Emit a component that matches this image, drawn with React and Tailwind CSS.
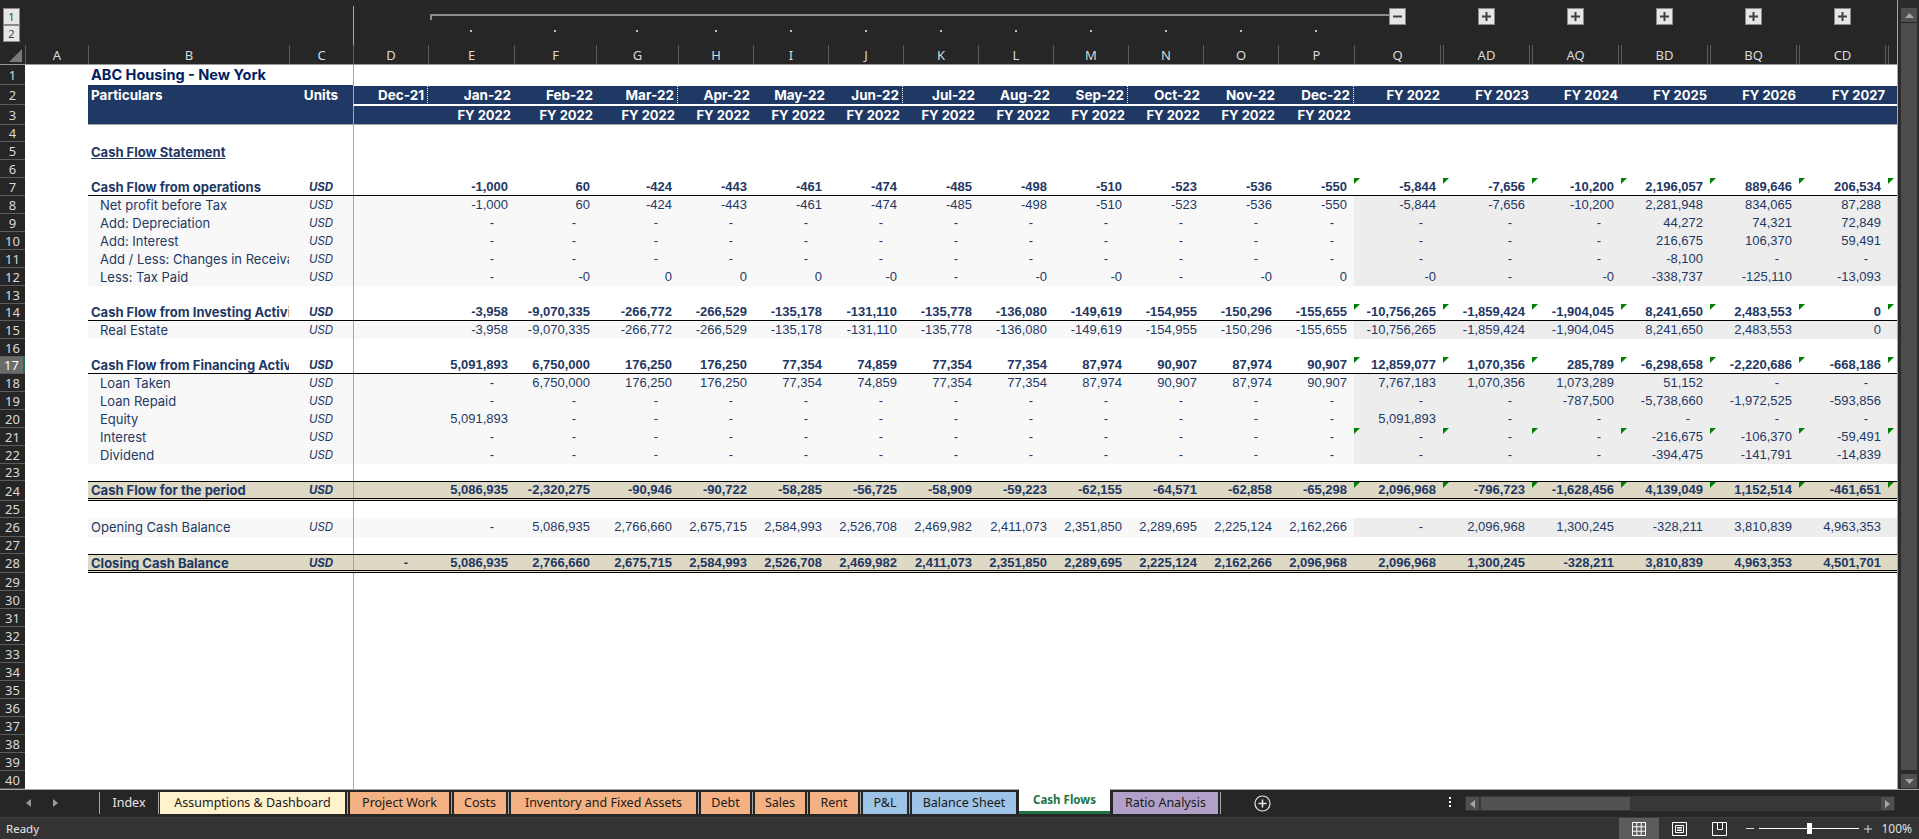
import React from "react";

const GRID = "grid grid-cols-[201px_64px_75px_86px_82px_82px_repeat(8,75px)_76px_repeat(6,89px)_9px] w-[1809px]";
const LABEL = "font-['Inter',sans-serif]";
const NUM = "font-['Liberation_Sans',sans-serif]";
const UI = "font-['Noto_Sans',sans-serif]";

const MONTHS = ["Dec-21","Jan-22","Feb-22","Mar-22","Apr-22","May-22","Jun-22","Jul-22","Aug-22","Sep-22","Oct-22","Nov-22","Dec-22","FY 2022","FY 2023","FY 2024","FY 2025","FY 2026","FY 2027"];
const LETTERS = ["B","C","D","E","F","G","H","I","J","K","L","M","N","O","P","Q","AD","AQ","BD","BQ","CD",""];
const DOTTED = new Set(["Dec-21","Mar-22","Jun-22","Sep-22","Dec-22"]);
const d = "-";

const rows = [
  { n: 4, h: "h-[17px]" },
  { n: 5, h: "h-[18px]", section: "Cash Flow Statement" },
  { n: 6, h: "h-[18px]" },
  { n: 7, h: "h-[18px]", kind: "head", tri: true, label: "Cash Flow from operations", v: ["","-1,000","60","-424","-443","-461","-474","-485","-498","-510","-523","-536","-550","-5,844","-7,656","-10,200","2,196,057","889,646","206,534"] },
  { n: 8, h: "h-[18px]", kind: "item", label: "Net profit before Tax", v: ["","-1,000","60","-424","-443","-461","-474","-485","-498","-510","-523","-536","-550","-5,844","-7,656","-10,200","2,281,948","834,065","87,288"] },
  { n: 9, h: "h-[18px]", kind: "item", label: "Add: Depreciation", v: ["",d,d,d,d,d,d,d,d,d,d,d,d,d,d,d,"44,272","74,321","72,849"] },
  { n: 10, h: "h-[18px]", kind: "item", label: "Add: Interest", v: ["",d,d,d,d,d,d,d,d,d,d,d,d,d,d,d,"216,675","106,370","59,491"] },
  { n: 11, h: "h-[18px]", kind: "item", label: "Add / Less: Changes in Receivables", v: ["",d,d,d,d,d,d,d,d,d,d,d,d,d,d,d,"-8,100",d,d] },
  { n: 12, h: "h-[18px]", kind: "item", label: "Less: Tax Paid", v: ["",d,"-0","0","0","0","-0",d,"-0","-0",d,"-0","0","-0",d,"-0","-338,737","-125,110","-13,093"] },
  { n: 13, h: "h-[18px]" },
  { n: 14, h: "h-[17px]", kind: "head", tri: true, label: "Cash Flow from Investing Activities", v: ["","-3,958","-9,070,335","-266,772","-266,529","-135,178","-131,110","-135,778","-136,080","-149,619","-154,955","-150,296","-155,655","-10,756,265","-1,859,424","-1,904,045","8,241,650","2,483,553","0"] },
  { n: 15, h: "h-[18px]", kind: "item", label: "Real Estate", v: ["","-3,958","-9,070,335","-266,772","-266,529","-135,178","-131,110","-135,778","-136,080","-149,619","-154,955","-150,296","-155,655","-10,756,265","-1,859,424","-1,904,045","8,241,650","2,483,553","0"] },
  { n: 16, h: "h-[18px]" },
  { n: 17, h: "h-[17px]", kind: "head", tri: true, sel: true, label: "Cash Flow from Financing Activities", v: ["","5,091,893","6,750,000","176,250","176,250","77,354","74,859","77,354","77,354","87,974","90,907","87,974","90,907","12,859,077","1,070,356","285,789","-6,298,658","-2,220,686","-668,186"] },
  { n: 18, h: "h-[18px]", kind: "item", label: "Loan Taken", v: ["",d,"6,750,000","176,250","176,250","77,354","74,859","77,354","77,354","87,974","90,907","87,974","90,907","7,767,183","1,070,356","1,073,289","51,152",d,d] },
  { n: 19, h: "h-[18px]", kind: "item", label: "Loan Repaid", v: ["",d,d,d,d,d,d,d,d,d,d,d,d,d,d,"-787,500","-5,738,660","-1,972,525","-593,856"] },
  { n: 20, h: "h-[18px]", kind: "item", label: "Equity", v: ["","5,091,893",d,d,d,d,d,d,d,d,d,d,d,"5,091,893",d,d,d,d,d] },
  { n: 21, h: "h-[18px]", kind: "item", tri: true, label: "Interest", v: ["",d,d,d,d,d,d,d,d,d,d,d,d,d,d,d,"-216,675","-106,370","-59,491"] },
  { n: 22, h: "h-[18px]", kind: "item", label: "Dividend", v: ["",d,d,d,d,d,d,d,d,d,d,d,d,d,d,d,"-394,475","-141,791","-14,839"] },
  { n: 23, h: "h-[17px]" },
  { n: 24, h: "h-[20px]", kind: "total", tri: true, label: "Cash Flow for the period", v: ["","5,086,935","-2,320,275","-90,946","-90,722","-58,285","-56,725","-58,909","-59,223","-62,155","-64,571","-62,858","-65,298","2,096,968","-796,723","-1,628,456","4,139,049","1,152,514","-461,651"] },
  { n: 25, h: "h-[17px]" },
  { n: 26, h: "h-[19px]", kind: "item", flat: true, label: "Opening Cash Balance", v: ["",d,"5,086,935","2,766,660","2,675,715","2,584,993","2,526,708","2,469,982","2,411,073","2,351,850","2,289,695","2,225,124","2,162,266",d,"2,096,968","1,300,245","-328,211","3,810,839","4,963,353"] },
  { n: 27, h: "h-[17px]" },
  { n: 28, h: "h-[19px]", kind: "total", label: "Closing Cash Balance", v: [d,"5,086,935","2,766,660","2,675,715","2,584,993","2,526,708","2,469,982","2,411,073","2,351,850","2,289,695","2,225,124","2,162,266","2,096,968","2,096,968","1,300,245","-328,211","3,810,839","4,963,353","4,501,701"] },
  ...[29,30,31,32,33,34,35,36,37,38,39,40].map((n) => ({ n, h: "h-[18px]" })),
];

function Tri() {
  return (
    <svg className="absolute top-0 left-0" width="6" height="6" viewBox="0 0 6 6">
      <polygon points="0,0 6,0 0,6" fill="#008000" />
    </svg>
  );
}

function RowNum({ n, sel }) {
  return (
    <div className={`w-[25px] shrink-0 h-full flex items-center justify-center border-b border-[#5c5c5c] text-[13px] leading-[14px] ${UI} ${sel ? "bg-[#6b6b6b] text-white border-r-2 border-r-[#217346]" : "bg-[#262626] text-[#d9d9d9]"}`}>
      {n}
    </div>
  );
}

function Row({ r }) {
  const k = r.kind;
  const wrap = k === "head" ? "border-b border-black" : k === "total" ? "bg-[#ddd9c4] border-t border-black border-b-[3px] border-double" : "";
  const weight = k === "item" ? "font-normal" : "font-bold";
  const leftBg = k === "item" ? "bg-[#f8f8f8]" : "";
  const rightBg = k === "item" ? "bg-[#ededed]" : "";
  const nudge = k === "item" ? "pb-[1px]" : "";
  return (
    <div className={`flex ${r.h}`}>
      <RowNum n={r.n} sel={r.sel} />
      <div className="w-[63px] shrink-0" />
      <div className={`${GRID} h-full ${wrap} ${k === "total" ? "border-b-black" : ""}`}>
        <div className={`${leftBg} ${k === "item" && !r.flat ? "pl-[12px]" : "pl-[3px]"} ${nudge} flex items-center overflow-hidden whitespace-nowrap leading-[14px] text-[#1f3864] ${LABEL} text-[13px] ${weight}`}>
          {r.section ? <span className="font-bold underline pt-[1px]">{r.section}</span> : r.label}
        </div>
        <div className={`${leftBg} ${nudge} flex items-center justify-center italic leading-[14px] text-[#1f3864] ${LABEL} text-[11.5px] ${weight}`}>
          {k ? "USD" : ""}
        </div>
        {MONTHS.map((m, i) => {
          const val = r.v ? r.v[i] : "";
          const bg = i >= 13 ? rightBg : leftBg;
          const pad = val === d ? "pr-[20px]" : i >= 12 ? "pr-[7px]" : "pr-[6px]";
          return (
            <div key={m} className={`relative ${bg} ${i === 0 ? "border-l border-[#a6a6a6]" : ""} ${pad} ${nudge} flex items-center justify-end whitespace-nowrap leading-[14px] text-[13px] text-[#1f3864] ${NUM} ${weight}`}>
              {r.tri && i >= 13 ? <Tri /> : null}
              {val}
            </div>
          );
        })}
        <div className={`relative ${rightBg}`}>{r.tri ? <Tri /> : null}</div>
      </div>
    </div>
  );
}

function OutlineBtn({ children }) {
  return (
    <div className={`w-[17px] h-[17px] flex items-center justify-center bg-[#e6e6e6] border border-[#8a8a8a] text-[11px] leading-none text-[#404040] ${UI}`}>
      {children}
    </div>
  );
}

function PlusMinus({ plus }) {
  return (
    <div className="w-[17px] h-[17px] flex items-center justify-center bg-[#e6e6e6] border border-[#8a8a8a] shrink-0">
      <svg width="9" height="9" viewBox="0 0 9 9">
        <rect x="0" y="3.5" width="9" height="2" fill="#404040" />
        {plus ? <rect x="3.5" y="0" width="2" height="9" fill="#404040" /> : null}
      </svg>
    </div>
  );
}

function Sep() {
  return <div className="w-[1px] h-[22px] mx-[2px] bg-[#a6a6a6] shrink-0" />;
}

function Tab({ w, bg, children }) {
  return (
    <div className={`${w} ${bg} h-[22px] shrink-0 flex items-center justify-center text-[12.5px] text-[#1a1a1a] whitespace-nowrap ${UI}`}>
      {children}
    </div>
  );
}

export default function App() {
  return (
    <div className={`w-[1919px] h-[839px] overflow-hidden flex flex-col bg-[#262626] ${UI}`}>
      <div className="flex h-[789px]">
        <div className="w-[1898px] shrink-0 flex flex-col border-r border-[#a6a6a6] bg-white">
          {/* outline bar */}
          <div className="flex h-[45px] bg-[#262626]">
            <div className="w-[25px] pt-[8px] pl-[3px] flex flex-col shrink-0">
              <OutlineBtn>1</OutlineBtn>
              <OutlineBtn>2</OutlineBtn>
            </div>
            <div className="w-[328px] shrink-0" />
            <div className="flex-1 mt-[6px] border-l border-[#a6a6a6] pt-[2px]">
              <div className="flex items-start h-[17px]">
                <div className="w-[76px] shrink-0" />
                <div className="w-[959px] shrink-0 h-[6px] mt-[6px] border-l-2 border-t-2 border-[#8c8c8c]" />
                <PlusMinus />
                {[0, 1, 2, 3, 4].map((i) => (
                  <div key={i} className="flex">
                    <div className="w-[72px]" />
                    <PlusMinus plus />
                  </div>
                ))}
              </div>
              <div className="grid grid-cols-[74px_86px_82px_82px_repeat(9,75px)] pt-[5px]">
                <div />
                {[0, 1, 2, 3, 4, 5, 6, 7, 8, 9, 10, 11].map((i) => (
                  <div key={i} className="flex justify-center">
                    <div className="w-[2px] h-[2px] bg-[#bfbfbf]" />
                  </div>
                ))}
              </div>
            </div>
          </div>
          {/* column letters */}
          <div className={`flex h-[20px] bg-[#262626] border-b border-[#9a9a9a] text-[13px] leading-[14px] text-[#d9d9d9] ${UI}`}>
            <div className="w-[25px] shrink-0 flex items-end justify-end pr-[3px] pb-[2px]">
              <svg width="13" height="13" viewBox="0 0 13 13"><polygon points="13,0 13,13 0,13" fill="#7a7a7a" /></svg>
            </div>
            <div className="w-[63px] shrink-0 flex items-center justify-center border-l border-[#5c5c5c]">A</div>
            <div className={GRID}>
              {LETTERS.map((l, i) => (
                <div key={i} className="flex items-center h-full border-l border-[#5c5c5c]">
                  <span className="flex-1 text-center">{l}</span>
                  {i >= 15 && i < 21 ? <span className="w-[3px] h-full border-l border-[#5c5c5c]" /> : null}
                </div>
              ))}
            </div>
          </div>
          {/* row 1 */}
          <div className="flex h-[20px]">
            <RowNum n={1} />
            <div className="w-[63px] shrink-0" />
            <div className={GRID}>
              <div className={`col-span-2 pl-[3px] pb-[1px] flex items-center whitespace-nowrap leading-[16px] text-[14.5px] font-bold text-[#002060] ${LABEL}`}>ABC Housing - New York</div>
              <div className="col-span-20 border-l border-[#a6a6a6]" />
            </div>
          </div>
          {/* row 2 */}
          <div className="flex h-[20px]">
            <RowNum n={2} />
            <div className="w-[63px] shrink-0" />
            <div className={GRID}>
              <div className={`bg-[#1f3864] pl-[3px] flex items-center text-white font-bold leading-[14px] text-[13.5px] ${LABEL}`}>Particulars</div>
              <div className={`bg-[#1f3864] flex items-center justify-center text-white font-bold leading-[14px] text-[13.5px] ${LABEL}`}>Units</div>
              {MONTHS.map((m, i) => (
                <div key={m} className={`bg-[#1f3864] border-t border-b border-t-white border-b-white pr-[3px] flex items-center justify-end text-white font-bold leading-[14px] ${i >= 13 ? "text-[13px]" : "text-[13.5px]"} whitespace-nowrap ${LABEL} ${i === 0 ? "border-l border-l-[#a6a6a6]" : ""} ${DOTTED.has(m) ? "border-r border-r-white [border-right-style:dotted]" : ""}`}>{m}</div>
              ))}
              <div className="bg-[#1f3864] border-t border-b border-white" />
            </div>
          </div>
          {/* row 3 */}
          <div className="flex h-[20px]">
            <RowNum n={3} />
            <div className="w-[63px] shrink-0" />
            <div className={`${GRID} border-b border-[#a6a6a6]`}>
              <div className="bg-[#1f3864]" />
              <div className="bg-[#1f3864]" />
              {MONTHS.map((m, i) => (
                <div key={m} className={`bg-[#1f3864] border-t border-white pr-[3px] flex items-center justify-end text-white font-bold leading-[14px] text-[13px] whitespace-nowrap ${LABEL} ${i === 0 ? "border-l border-l-[#a6a6a6]" : ""}`}>
                  {i >= 1 && i <= 12 ? "FY 2022" : ""}
                </div>
              ))}
              <div className="bg-[#1f3864] border-t border-white" />
            </div>
          </div>
          {rows.map((r) => (
            <Row key={r.n} r={r} />
          ))}
        </div>
        {/* vertical scrollbar */}
        <div className="flex-1 flex flex-col pl-[3px] pr-[2px] pt-[8px] pb-[1px] gap-[1px] bg-[#2b2b2b]">
          <div className="h-[14px] bg-[#4f4f4f] flex items-center justify-center shrink-0">
            <svg width="9" height="5" viewBox="0 0 9 5"><polygon points="4.5,0 9,5 0,5" fill="#a6a6a6" /></svg>
          </div>
          <div className="flex-1 bg-[#4c4c4c] mb-[3px]" />
          <div className="h-[14px] bg-[#4f4f4f] flex items-center justify-center shrink-0">
            <svg width="9" height="5" viewBox="0 0 9 5"><polygon points="0,0 9,0 4.5,5" fill="#a6a6a6" /></svg>
          </div>
        </div>
      </div>
      {/* tab bar */}
      <div className="h-[28px] border-t border-[#a6a6a6] bg-[#262626] flex items-start pt-[2px] shrink-0">
        <div className="w-[99px] h-[22px] shrink-0 flex items-center pl-[26px] gap-[22px]">
          <svg width="5" height="8" viewBox="0 0 5 8"><polygon points="5,0 5,8 0,4" fill="#9a9a9a" /></svg>
          <svg width="5" height="8" viewBox="0 0 5 8"><polygon points="0,0 0,8 5,4" fill="#9a9a9a" /></svg>
        </div>
        <div className="w-[1px] h-[22px] bg-[#a6a6a6] shrink-0" />
        <div className="w-[58px] h-[22px] shrink-0 flex items-center justify-center text-[12.5px] text-[#e6e6e6]">Index</div>
        <div className="w-[1px] h-[22px] bg-[#a6a6a6] shrink-0 mr-[1px]" />
        <Tab w="w-[185px]" bg="bg-[#fff2cc]">Assumptions &amp; Dashboard</Tab>
        <Sep />
        <Tab w="w-[99px]" bg="bg-[#f4b183]">Project Work</Tab>
        <Sep />
        <Tab w="w-[52px]" bg="bg-[#f4b183]">Costs</Tab>
        <Sep />
        <Tab w="w-[185px]" bg="bg-[#f4b183]">Inventory and Fixed Assets</Tab>
        <Sep />
        <Tab w="w-[49px]" bg="bg-[#f4b183]">Debt</Tab>
        <Sep />
        <Tab w="w-[50px]" bg="bg-[#f4b183]">Sales</Tab>
        <Sep />
        <Tab w="w-[48px]" bg="bg-[#f4b183]">Rent</Tab>
        <Sep />
        <Tab w="w-[44px]" bg="bg-[#9dc3e6]">P&amp;L</Tab>
        <Sep />
        <Tab w="w-[104px]" bg="bg-[#9dc3e6]">Balance Sheet</Tab>
        <div className="w-[3px] shrink-0" />
        <div className="w-[91px] h-[25px] -mt-[3px] shrink-0 bg-white border-b-[3px] border-[#217346] flex items-center justify-center text-[11.5px] font-bold text-[#217346]">Cash Flows</div>
        <div className="w-[3px] shrink-0" />
        <Tab w="w-[105px]" bg="bg-[#b1a0c7]">Ratio Analysis</Tab>
        <div className="w-[1px] h-[22px] ml-[2px] bg-[#a6a6a6] shrink-0" />
        <div className="w-[33px] shrink-0" />
        <svg width="17" height="17" viewBox="0 0 17 17" className="shrink-0 mt-[3px]">
          <circle cx="8.5" cy="8.5" r="7.5" fill="none" stroke="#e6e6e6" strokeWidth="1.2" />
          <path d="M8.5 4.5v8M4.5 8.5h8" stroke="#e6e6e6" strokeWidth="1.6" />
        </svg>
        <div className="w-[178px] shrink-0" />
        <div className="flex flex-col gap-[2px] mt-[5px] shrink-0">
          <div className="w-[2px] h-[2px] bg-white" />
          <div className="w-[2px] h-[2px] bg-white" />
          <div className="w-[2px] h-[2px] bg-white" />
        </div>
        <div className="w-[14px] shrink-0" />
        <div className="w-[430px] h-[15px] mt-[4px] shrink-0 bg-[#373737] flex items-center gap-[2px] px-[1px]">
          <div className="w-[13px] h-[13px] bg-[#4f4f4f] flex items-center justify-center shrink-0">
            <svg width="5" height="8" viewBox="0 0 5 8"><polygon points="5,0 5,8 0,4" fill="#a6a6a6" /></svg>
          </div>
          <div className="w-[149px] h-[13px] bg-[#525252] shrink-0" />
          <div className="flex-1" />
          <div className="w-[13px] h-[13px] bg-[#4f4f4f] flex items-center justify-center shrink-0">
            <svg width="5" height="8" viewBox="0 0 5 8"><polygon points="0,0 0,8 5,4" fill="#a6a6a6" /></svg>
          </div>
        </div>
      </div>
      {/* status bar */}
      <div className="h-[22px] bg-[#333333] border-t border-[#3f3f3f] flex items-center shrink-0">
        <div className="w-[1619px] pl-[6px] text-[11.5px] text-[#e6e6e6] shrink-0">Ready</div>
        <div className="w-[40px] h-full bg-[#5c5c5c] flex items-center justify-center shrink-0">
          <svg width="14" height="14" viewBox="0 0 14 14" fill="none" stroke="#fff"><path d="M.5.5h13v13H.5zM.5 4.8h13M.5 9.2h13M4.8.5v13M9.2.5v13" /></svg>
        </div>
        <div className="w-[40px] flex justify-center shrink-0">
          <svg width="15" height="14" viewBox="0 0 15 14" fill="none" stroke="#fff"><path d="M.5.5h14v13H.5zM3.5 3.5h8v7h-8zM5 5.5h5M5 7h5M5 8.5h5" /></svg>
        </div>
        <div className="w-[40px] flex justify-center shrink-0">
          <svg width="15" height="14" viewBox="0 0 15 14" fill="none" stroke="#fff"><path d="M.5.5h14v13H.5zM5.5.5v7h5v-7" /></svg>
        </div>
        <div className="w-[7px] shrink-0" />
        <div className="w-[8px] h-[1px] bg-[#d9d9d9] shrink-0" />
        <div className="w-[5px] shrink-0" />
        <div className="w-[100px] h-[1px] bg-white shrink-0 flex items-center pl-[48px]">
          <div className="w-[5px] h-[11px] bg-white shrink-0" />
        </div>
        <div className="w-[5px] shrink-0" />
        <svg width="8" height="8" viewBox="0 0 8 8" className="shrink-0"><path d="M4 0v8M0 4h8" stroke="#d9d9d9" /></svg>
        <div className="flex-1 text-[12px] text-right pr-[7px] text-[#e0e0e0]">100%</div>
      </div>
    </div>
  );
}
